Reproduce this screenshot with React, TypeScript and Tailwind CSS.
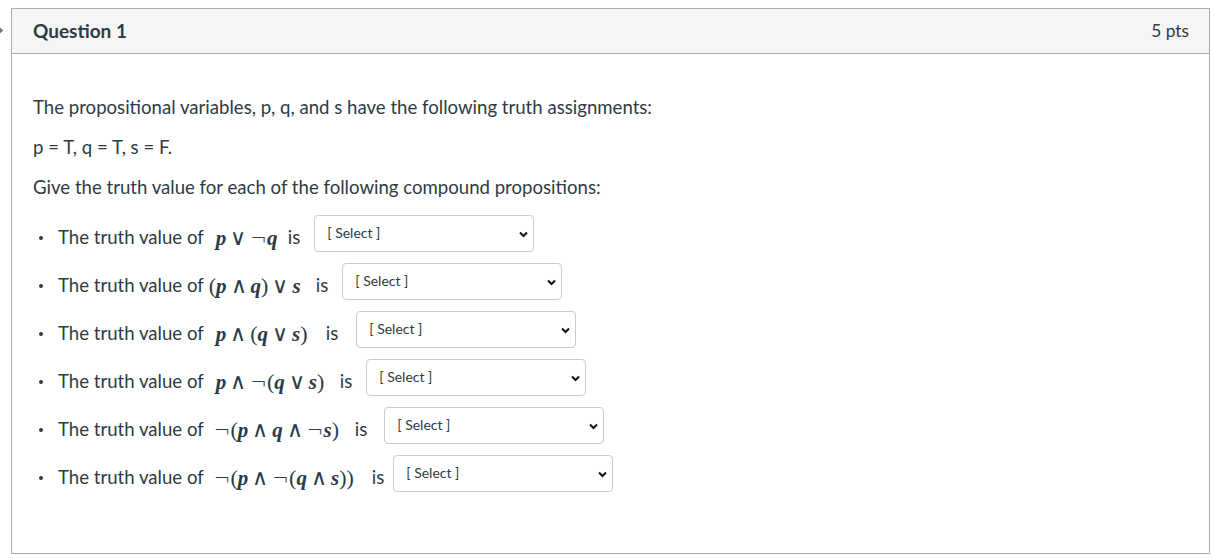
import React from "react";

const mathFont = { fontFamily: '"Liberation Serif", "DejaVu Serif", serif' };
const symFont = { fontFamily: '"DejaVu Sans", sans-serif' };

function V({ children }: { children: React.ReactNode }) {
  return <i className="font-semibold">{children}</i>;
}

function Op({ children }: { children: React.ReactNode }) {
  return (
    <span className="mx-[4px] text-[22px] font-light not-italic" style={symFont}>
      {children}
    </span>
  );
}

function Neg() {
  return (
    <span className="text-[20px] font-light" style={symFont}>
      ¬
    </span>
  );
}

function P({ children }: { children: React.ReactNode }) {
  return <span className="text-[22px] font-normal">{children}</span>;
}

function Chevron() {
  return (
    <svg width="9" height="7" viewBox="0 0 9 7" className="pointer-events-none absolute right-[5px] top-[15px]">
      <path d="M1 1.5 4.5 5 8 1.5" fill="none" stroke="#111" strokeWidth="2" />
    </svg>
  );
}

const rows: { expr: React.ReactNode; ml: string; w: string; sel: string }[] = [
  {
    expr: (
      <>
        <V>p</V>
        <Op>∨</Op>
        <Neg />
        <V>q</V>
      </>
    ),
    ml: "ml-[12px]",
    w: "w-[72px]",
    sel: "ml-[14px]",
  },
  {
    expr: (
      <>
        <P>(</P>
        <V>p</V>
        <Op>∧</Op>
        <V>q</V>
        <P>)</P>
        <Op>∨</Op>
        <V>s</V>
      </>
    ),
    ml: "ml-[5px]",
    w: "w-[107px]",
    sel: "ml-[14px]",
  },
  {
    expr: (
      <>
        <V>p</V>
        <Op>∧</Op>
        <P>(</P>
        <V>q</V>
        <Op>∨</Op>
        <V>s</V>
        <P>)</P>
      </>
    ),
    ml: "ml-[12px]",
    w: "w-[110px]",
    sel: "ml-[18px]",
  },
  {
    expr: (
      <>
        <V>p</V>
        <Op>∧</Op>
        <Neg />
        <P>(</P>
        <V>q</V>
        <Op>∨</Op>
        <V>s</V>
        <P>)</P>
      </>
    ),
    ml: "ml-[12px]",
    w: "w-[124px]",
    sel: "ml-[14px]",
  },
  {
    expr: (
      <>
        <Neg />
        <P>(</P>
        <V>p</V>
        <Op>∧</Op>
        <V>q</V>
        <Op>∧</Op>
        <Neg />
        <V>s</V>
        <P>)</P>
      </>
    ),
    ml: "ml-[10px]",
    w: "w-[141px]",
    sel: "ml-[17px]",
  },
  {
    expr: (
      <>
        <Neg />
        <P>(</P>
        <V>p</V>
        <Op>∧</Op>
        <Neg />
        <P>(</P>
        <V>q</V>
        <Op>∧</Op>
        <V>s</V>
        <P>))</P>
      </>
    ),
    ml: "ml-[10px]",
    w: "w-[158px]",
    sel: "ml-[9px]",
  },
];

export default function App() {
  return (
    <div
      className="relative h-[559px] w-[1215px] bg-white pl-[11px] pt-[8px] text-[#2d3b45]"
      style={{ fontFamily: 'Lato, "Open Sans", sans-serif' }}
    >
      {/* cut-off marker at the left edge */}
      <div className="absolute left-[-3px] top-[28px] h-[5px] w-[5px] rotate-45 border-r-2 border-t-2 border-[#5f7b94]" />
      <div className="flex h-[546px] w-[1199px] flex-col border border-[#adadad]">
        <div className="flex h-[45px] shrink-0 items-center justify-between border-b border-[#adadad] bg-[#f5f5f5] pl-[21px] pr-[20px]">
          <h2 className="text-[19px] font-bold">Question 1</h2>
          <span className="text-[17.3px]">5 pts</span>
        </div>
        <div className="pl-[21px] pt-[40px] text-[18.6px]">
          <p className="leading-[27px]">The propositional variables, p, q, and s have the following truth assignments:</p>
          <p className="mt-[13px] leading-[27px]">p = T, q = T, s = F.</p>
          <p className="mt-[13px] leading-[27px]">Give the truth value for each of the following compound propositions:</p>
          <ul className="mt-[18px] flex flex-col gap-[11px]">
            {rows.map((r, i) => (
              <li key={i} className="flex h-[37px] items-center">
                <span className="mx-[6px] h-[4px] w-[4px] shrink-0 rounded-full bg-[#2d3b45]" />
                <span className="ml-[9px] whitespace-nowrap">The truth value of</span>
                <span className={"inline-block shrink-0 whitespace-nowrap text-[21px] " + r.ml + " " + r.w} style={mathFont}>
                  {r.expr}
                </span>
                <span>is</span>
                <div className={"relative mb-[8px] h-[37px] w-[220px] shrink-0 rounded-[4px] border border-[#c7cdd1] bg-white " + r.sel}>
                  <span className="absolute left-[12px] top-[8px] text-[14px] leading-[18px] text-[#2d3b45]">[ Select ]</span>
                  <Chevron />
                </div>
              </li>
            ))}
          </ul>
        </div>
      </div>
    </div>
  );
}
